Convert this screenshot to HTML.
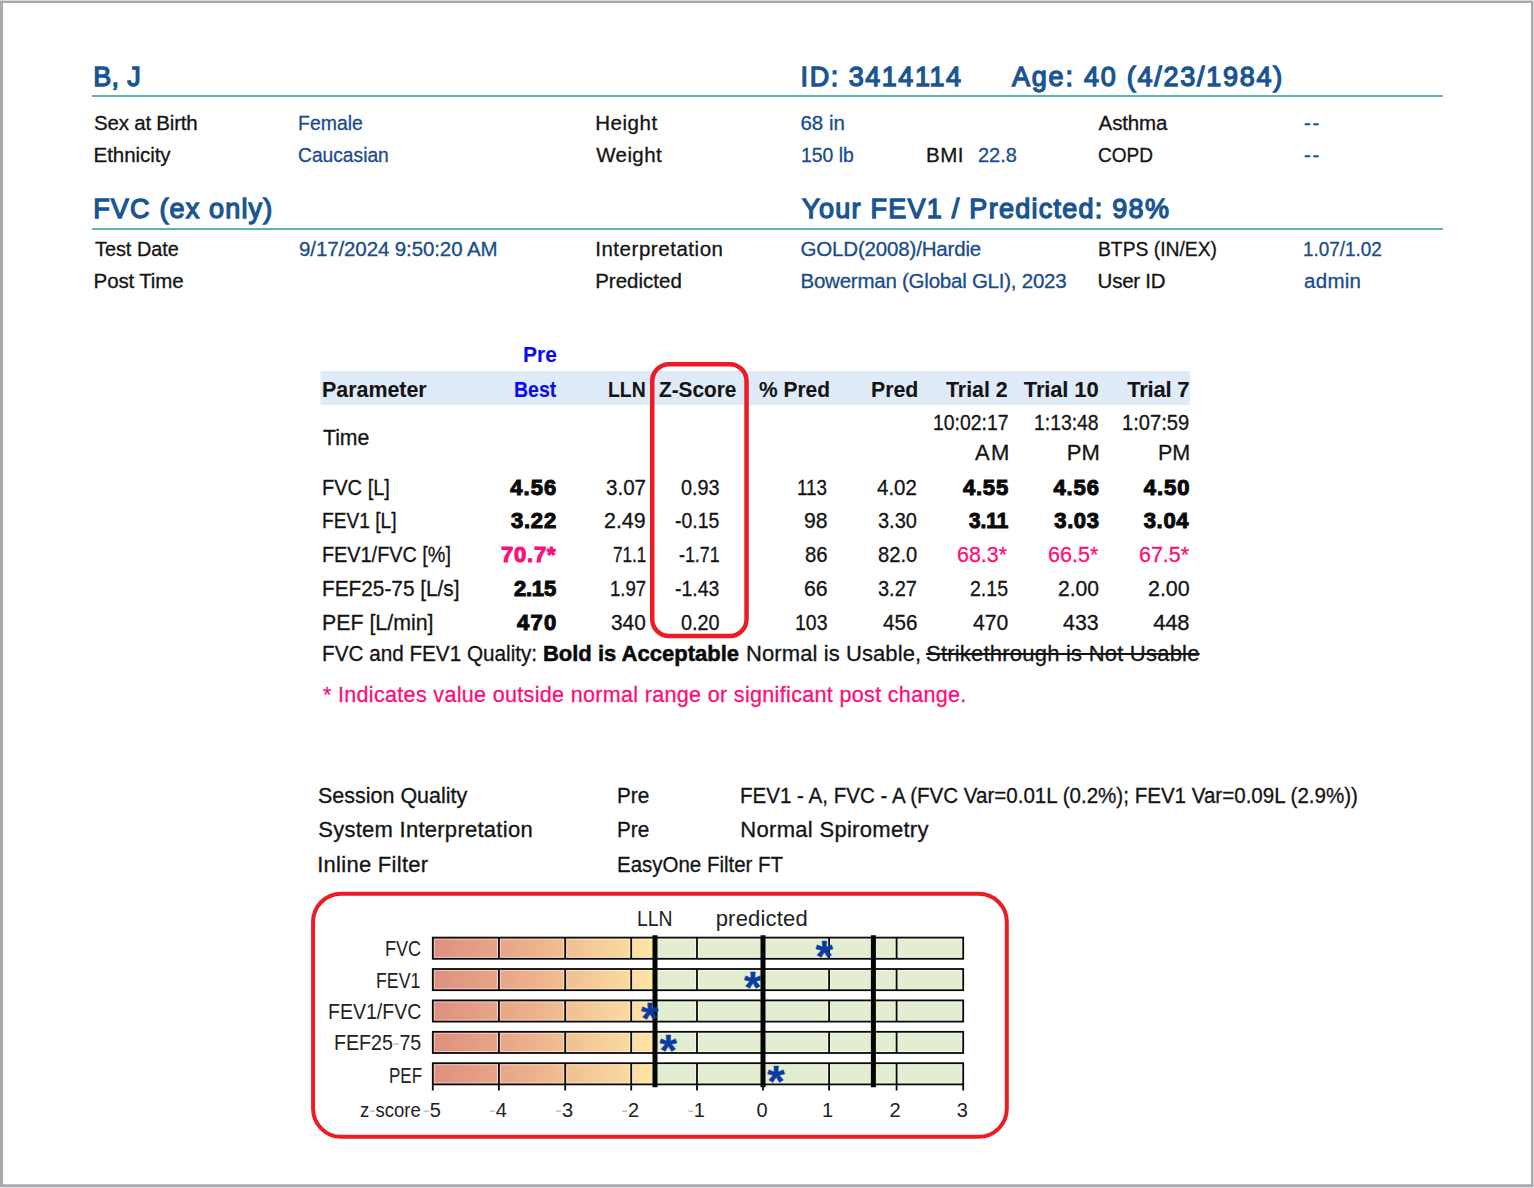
<!DOCTYPE html>
<html lang="en">
<head>
<meta charset="utf-8">
<title>Spirometry Report</title>
<style>
html,body{margin:0;padding:0;}
body{width:1534px;height:1188px;position:relative;overflow:hidden;background:#fff;font-family:"Liberation Sans",sans-serif;color:#141414;}
.frame{position:absolute;left:0;top:0;width:1534px;height:1188px;box-sizing:border-box;border-style:solid;border-color:#a6a8ad;border-width:3px 3px 3px 3px;}
.edge-b2{position:absolute;left:3px;bottom:3px;width:1528px;height:1px;background:#bfc0c4;}
.edge-t{position:absolute;left:0;top:0;width:1534px;height:1px;background:#d6d8db;}
.edge-r{position:absolute;right:0;top:0;width:1px;height:1188px;background:#d6d8db;}
.edge-b{position:absolute;left:0;bottom:0;width:1534px;height:1px;background:#e4e5e7;}
.t{position:absolute;white-space:pre;transform-origin:0 0;-webkit-text-stroke:0.3px currentColor;}
.t i{font-style:normal;color:#c4c4c4;}
.rule{position:absolute;left:92px;width:1351px;height:2px;background:#5fb4b6;}
svg{position:absolute;left:0;top:0;}
</style>
</head>
<body>
<div class="frame"></div><div class="edge-t"></div><div class="edge-r"></div><div class="edge-b"></div><div class="edge-b2"></div>
<div class="rule" style="top:95px"></div>
<div class="rule" style="top:227.5px"></div>
<svg width="1534" height="1188" viewBox="0 0 1534 1188">
<defs><linearGradient id="g" gradientUnits="userSpaceOnUse" x1="432.8" y1="0" x2="655.0" y2="0"><stop offset="0" stop-color="#de8f7e"/><stop offset="0.45" stop-color="#ecb18c"/><stop offset="1" stop-color="#fee5a5"/></linearGradient></defs>
<rect x="320.5" y="371" width="869.5" height="34.1" fill="#e0ebf8"/>
<rect x="432.80" y="937.60" width="222.20" height="21.20" fill="url(#g)"/>
<rect x="655.00" y="937.60" width="308.20" height="21.20" fill="#e3edd0"/>
<rect x="434.20" y="939.00" width="63.30" height="18.40" fill="none" stroke="#fff" stroke-opacity="0.5" stroke-width="1.2"/>
<rect x="500.30" y="939.00" width="63.50" height="18.40" fill="none" stroke="#fff" stroke-opacity="0.5" stroke-width="1.2"/>
<rect x="566.60" y="939.00" width="63.20" height="18.40" fill="none" stroke="#fff" stroke-opacity="0.5" stroke-width="1.2"/>
<rect x="632.60" y="939.00" width="63.00" height="18.40" fill="none" stroke="#fff" stroke-opacity="0.5" stroke-width="1.2"/>
<rect x="698.40" y="939.00" width="63.20" height="18.40" fill="none" stroke="#fff" stroke-opacity="0.5" stroke-width="1.2"/>
<rect x="764.40" y="939.00" width="63.30" height="18.40" fill="none" stroke="#fff" stroke-opacity="0.5" stroke-width="1.2"/>
<rect x="830.50" y="939.00" width="64.70" height="18.40" fill="none" stroke="#fff" stroke-opacity="0.5" stroke-width="1.2"/>
<rect x="898.00" y="939.00" width="63.80" height="18.40" fill="none" stroke="#fff" stroke-opacity="0.5" stroke-width="1.2"/>
<rect x="432.80" y="937.60" width="530.40" height="21.20" fill="none" stroke="#0a0a0a" stroke-width="1.80"/>
<path d="M498.90 937.60V958.80M565.20 937.60V958.80M631.20 937.60V958.80M697.00 937.60V958.80M763.00 937.60V958.80M829.10 937.60V958.80M896.60 937.60V958.80" stroke="#0a0a0a" stroke-width="1.80" fill="none"/>
<rect x="432.80" y="969.00" width="222.20" height="21.20" fill="url(#g)"/>
<rect x="655.00" y="969.00" width="308.20" height="21.20" fill="#e3edd0"/>
<rect x="434.20" y="970.40" width="63.30" height="18.40" fill="none" stroke="#fff" stroke-opacity="0.5" stroke-width="1.2"/>
<rect x="500.30" y="970.40" width="63.50" height="18.40" fill="none" stroke="#fff" stroke-opacity="0.5" stroke-width="1.2"/>
<rect x="566.60" y="970.40" width="63.20" height="18.40" fill="none" stroke="#fff" stroke-opacity="0.5" stroke-width="1.2"/>
<rect x="632.60" y="970.40" width="63.00" height="18.40" fill="none" stroke="#fff" stroke-opacity="0.5" stroke-width="1.2"/>
<rect x="698.40" y="970.40" width="63.20" height="18.40" fill="none" stroke="#fff" stroke-opacity="0.5" stroke-width="1.2"/>
<rect x="764.40" y="970.40" width="63.30" height="18.40" fill="none" stroke="#fff" stroke-opacity="0.5" stroke-width="1.2"/>
<rect x="830.50" y="970.40" width="64.70" height="18.40" fill="none" stroke="#fff" stroke-opacity="0.5" stroke-width="1.2"/>
<rect x="898.00" y="970.40" width="63.80" height="18.40" fill="none" stroke="#fff" stroke-opacity="0.5" stroke-width="1.2"/>
<rect x="432.80" y="969.00" width="530.40" height="21.20" fill="none" stroke="#0a0a0a" stroke-width="1.80"/>
<path d="M498.90 969.00V990.20M565.20 969.00V990.20M631.20 969.00V990.20M697.00 969.00V990.20M763.00 969.00V990.20M829.10 969.00V990.20M896.60 969.00V990.20" stroke="#0a0a0a" stroke-width="1.80" fill="none"/>
<rect x="432.80" y="1000.40" width="222.20" height="21.20" fill="url(#g)"/>
<rect x="655.00" y="1000.40" width="308.20" height="21.20" fill="#e3edd0"/>
<rect x="434.20" y="1001.80" width="63.30" height="18.40" fill="none" stroke="#fff" stroke-opacity="0.5" stroke-width="1.2"/>
<rect x="500.30" y="1001.80" width="63.50" height="18.40" fill="none" stroke="#fff" stroke-opacity="0.5" stroke-width="1.2"/>
<rect x="566.60" y="1001.80" width="63.20" height="18.40" fill="none" stroke="#fff" stroke-opacity="0.5" stroke-width="1.2"/>
<rect x="632.60" y="1001.80" width="63.00" height="18.40" fill="none" stroke="#fff" stroke-opacity="0.5" stroke-width="1.2"/>
<rect x="698.40" y="1001.80" width="63.20" height="18.40" fill="none" stroke="#fff" stroke-opacity="0.5" stroke-width="1.2"/>
<rect x="764.40" y="1001.80" width="63.30" height="18.40" fill="none" stroke="#fff" stroke-opacity="0.5" stroke-width="1.2"/>
<rect x="830.50" y="1001.80" width="64.70" height="18.40" fill="none" stroke="#fff" stroke-opacity="0.5" stroke-width="1.2"/>
<rect x="898.00" y="1001.80" width="63.80" height="18.40" fill="none" stroke="#fff" stroke-opacity="0.5" stroke-width="1.2"/>
<rect x="432.80" y="1000.40" width="530.40" height="21.20" fill="none" stroke="#0a0a0a" stroke-width="1.80"/>
<path d="M498.90 1000.40V1021.60M565.20 1000.40V1021.60M631.20 1000.40V1021.60M697.00 1000.40V1021.60M763.00 1000.40V1021.60M829.10 1000.40V1021.60M896.60 1000.40V1021.60" stroke="#0a0a0a" stroke-width="1.80" fill="none"/>
<rect x="432.80" y="1031.80" width="222.20" height="21.20" fill="url(#g)"/>
<rect x="655.00" y="1031.80" width="308.20" height="21.20" fill="#e3edd0"/>
<rect x="434.20" y="1033.20" width="63.30" height="18.40" fill="none" stroke="#fff" stroke-opacity="0.5" stroke-width="1.2"/>
<rect x="500.30" y="1033.20" width="63.50" height="18.40" fill="none" stroke="#fff" stroke-opacity="0.5" stroke-width="1.2"/>
<rect x="566.60" y="1033.20" width="63.20" height="18.40" fill="none" stroke="#fff" stroke-opacity="0.5" stroke-width="1.2"/>
<rect x="632.60" y="1033.20" width="63.00" height="18.40" fill="none" stroke="#fff" stroke-opacity="0.5" stroke-width="1.2"/>
<rect x="698.40" y="1033.20" width="63.20" height="18.40" fill="none" stroke="#fff" stroke-opacity="0.5" stroke-width="1.2"/>
<rect x="764.40" y="1033.20" width="63.30" height="18.40" fill="none" stroke="#fff" stroke-opacity="0.5" stroke-width="1.2"/>
<rect x="830.50" y="1033.20" width="64.70" height="18.40" fill="none" stroke="#fff" stroke-opacity="0.5" stroke-width="1.2"/>
<rect x="898.00" y="1033.20" width="63.80" height="18.40" fill="none" stroke="#fff" stroke-opacity="0.5" stroke-width="1.2"/>
<rect x="432.80" y="1031.80" width="530.40" height="21.20" fill="none" stroke="#0a0a0a" stroke-width="1.80"/>
<path d="M498.90 1031.80V1053.00M565.20 1031.80V1053.00M631.20 1031.80V1053.00M697.00 1031.80V1053.00M763.00 1031.80V1053.00M829.10 1031.80V1053.00M896.60 1031.80V1053.00" stroke="#0a0a0a" stroke-width="1.80" fill="none"/>
<rect x="432.80" y="1063.20" width="222.20" height="21.20" fill="url(#g)"/>
<rect x="655.00" y="1063.20" width="308.20" height="21.20" fill="#e3edd0"/>
<rect x="434.20" y="1064.60" width="63.30" height="18.40" fill="none" stroke="#fff" stroke-opacity="0.5" stroke-width="1.2"/>
<rect x="500.30" y="1064.60" width="63.50" height="18.40" fill="none" stroke="#fff" stroke-opacity="0.5" stroke-width="1.2"/>
<rect x="566.60" y="1064.60" width="63.20" height="18.40" fill="none" stroke="#fff" stroke-opacity="0.5" stroke-width="1.2"/>
<rect x="632.60" y="1064.60" width="63.00" height="18.40" fill="none" stroke="#fff" stroke-opacity="0.5" stroke-width="1.2"/>
<rect x="698.40" y="1064.60" width="63.20" height="18.40" fill="none" stroke="#fff" stroke-opacity="0.5" stroke-width="1.2"/>
<rect x="764.40" y="1064.60" width="63.30" height="18.40" fill="none" stroke="#fff" stroke-opacity="0.5" stroke-width="1.2"/>
<rect x="830.50" y="1064.60" width="64.70" height="18.40" fill="none" stroke="#fff" stroke-opacity="0.5" stroke-width="1.2"/>
<rect x="898.00" y="1064.60" width="63.80" height="18.40" fill="none" stroke="#fff" stroke-opacity="0.5" stroke-width="1.2"/>
<rect x="432.80" y="1063.20" width="530.40" height="21.20" fill="none" stroke="#0a0a0a" stroke-width="1.80"/>
<path d="M498.90 1063.20V1084.40M565.20 1063.20V1084.40M631.20 1063.20V1084.40M697.00 1063.20V1084.40M763.00 1063.20V1084.40M829.10 1063.20V1084.40M896.60 1063.20V1084.40" stroke="#0a0a0a" stroke-width="1.80" fill="none"/>
<path d="M432.80 1084.40V1090.60M498.90 1084.40V1090.60M565.20 1084.40V1090.60M631.20 1084.40V1090.60M697.00 1084.40V1090.60M763.00 1084.40V1090.60M829.10 1084.40V1090.60M896.60 1084.40V1090.60M963.20 1084.40V1090.60" stroke="#0a0a0a" stroke-width="1.80" fill="none"/>
<path d="M655.00 935.2V1087.20" stroke="#050505" stroke-width="5" fill="none"/>
<path d="M763.00 935.2V1087.20" stroke="#050505" stroke-width="5" fill="none"/>
<path d="M873.40 935.2V1087.20" stroke="#050505" stroke-width="5" fill="none"/>
<rect x="652.25" y="364.25" width="94.3" height="271.8" rx="16.75" fill="none" stroke="#eb1c24" stroke-width="4.5"/>
<rect x="313.1" y="893.8" width="693.7" height="243" rx="28" fill="none" stroke="#eb1c24" stroke-width="4"/>
</svg>
<span class="t" style="left:93.20px;top:64.00px;font-size:27px;line-height:27px;color:#1a5593;letter-spacing:0.329px;-webkit-text-stroke:1.3px currentColor;">B, J</span>
<span class="t" style="left:800.60px;top:64.00px;font-size:27px;line-height:27px;color:#1a5593;letter-spacing:1.530px;-webkit-text-stroke:1.3px currentColor;">ID: 3414114</span>
<span class="t" style="left:1012.10px;top:64.00px;font-size:27px;line-height:27px;color:#1a5593;letter-spacing:1.751px;-webkit-text-stroke:1.3px currentColor;">Age: 40 (4/23/1984)</span>
<span class="t" style="left:94.00px;top:113.00px;font-size:20.5px;line-height:20.5px;letter-spacing:-0.206px;">Sex at Birth</span>
<span class="t" style="left:298.05px;top:113.00px;font-size:20.5px;line-height:20.5px;color:#1a4b8c;transform:scaleX(0.9484);">Female</span>
<span class="t" style="left:595.20px;top:113.00px;font-size:20.5px;line-height:20.5px;letter-spacing:0.528px;">Height</span>
<span class="t" style="left:800.50px;top:113.00px;font-size:20.5px;line-height:20.5px;color:#1a4b8c;letter-spacing:-0.038px;">68 in</span>
<span class="t" style="left:1098.60px;top:113.00px;font-size:20.5px;line-height:20.5px;letter-spacing:-0.139px;">Asthma</span>
<span class="t" style="left:1304.00px;top:113.00px;font-size:20.5px;line-height:20.5px;color:#1a4b8c;letter-spacing:1.773px;">--</span>
<span class="t" style="left:93.60px;top:145.00px;font-size:20.5px;line-height:20.5px;letter-spacing:-0.066px;">Ethnicity</span>
<span class="t" style="left:298.06px;top:145.00px;font-size:20.5px;line-height:20.5px;color:#1a4b8c;transform:scaleX(0.9375);">Caucasian</span>
<span class="t" style="left:596.20px;top:145.00px;font-size:20.5px;line-height:20.5px;letter-spacing:0.413px;">Weight</span>
<span class="t" style="left:800.55px;top:145.00px;font-size:20.5px;line-height:20.5px;color:#1a4b8c;transform:scaleX(0.9458);">150 lb</span>
<span class="t" style="left:926.00px;top:145.00px;font-size:20.5px;line-height:20.5px;letter-spacing:0.475px;">BMI</span>
<span class="t" style="left:977.53px;top:145.00px;font-size:20.5px;line-height:20.5px;color:#1a4b8c;transform:scaleX(0.9741);">22.8</span>
<span class="t" style="left:1097.67px;top:145.00px;font-size:20.5px;line-height:20.5px;transform:scaleX(0.9299);">COPD</span>
<span class="t" style="left:1304.00px;top:145.00px;font-size:20.5px;line-height:20.5px;color:#1a4b8c;letter-spacing:1.773px;">--</span>
<span class="t" style="left:93.20px;top:196.00px;font-size:27px;line-height:27px;color:#1a5593;letter-spacing:1.172px;-webkit-text-stroke:1.3px currentColor;">FVC (ex only)</span>
<span class="t" style="left:802.10px;top:196.00px;font-size:27px;line-height:27px;color:#1a5593;letter-spacing:1.265px;-webkit-text-stroke:1.3px currentColor;">Your FEV1 / Predicted: 98%</span>
<span class="t" style="left:94.60px;top:239.00px;font-size:20.5px;line-height:20.5px;transform:scaleX(0.9676);">Test Date</span>
<span class="t" style="left:299.00px;top:239.00px;font-size:20.5px;line-height:20.5px;color:#1a4b8c;letter-spacing:-0.108px;">9/17/2024 9:50:20 AM</span>
<span class="t" style="left:595.20px;top:239.00px;font-size:20.5px;line-height:20.5px;letter-spacing:0.539px;">Interpretation</span>
<span class="t" style="left:800.50px;top:239.00px;font-size:20.5px;line-height:20.5px;color:#1a4b8c;letter-spacing:-0.171px;">GOLD(2008)/Hardie</span>
<span class="t" style="left:1097.66px;top:239.00px;font-size:20.5px;line-height:20.5px;transform:scaleX(0.9414);">BTPS (IN/EX)</span>
<span class="t" style="left:1303.08px;top:239.00px;font-size:20.5px;line-height:20.5px;color:#1a4b8c;transform:scaleX(0.9228);">1.07/1.02</span>
<span class="t" style="left:93.60px;top:271.00px;font-size:20.5px;line-height:20.5px;letter-spacing:-0.139px;">Post Time</span>
<span class="t" style="left:595.20px;top:271.00px;font-size:20.5px;line-height:20.5px;letter-spacing:0.012px;">Predicted</span>
<span class="t" style="left:800.50px;top:271.00px;font-size:20.5px;line-height:20.5px;color:#1a4b8c;letter-spacing:-0.239px;">Bowerman (Global GLI), 2023</span>
<span class="t" style="left:1097.60px;top:271.00px;font-size:20.5px;line-height:20.5px;letter-spacing:-0.246px;">User ID</span>
<span class="t" style="left:1304.00px;top:271.00px;font-size:20.5px;line-height:20.5px;color:#1a4b8c;letter-spacing:0.292px;">admin</span>
<span class="t" style="left:522.84px;top:344.00px;font-size:22px;line-height:22px;font-weight:700;color:#0a0af0;transform:scaleX(0.9552);-webkit-text-stroke:0.1px currentColor;">Pre</span>
<span class="t" style="left:321.93px;top:379.00px;font-size:22px;line-height:22px;font-weight:700;transform:scaleX(0.9723);-webkit-text-stroke:0.1px currentColor;">Parameter</span>
<span class="t" style="left:513.61px;top:379.00px;font-size:22px;line-height:22px;font-weight:700;color:#0a0af0;transform:scaleX(0.8869);-webkit-text-stroke:0.1px currentColor;">Best</span>
<span class="t" style="left:608.12px;top:379.00px;font-size:22px;line-height:22px;font-weight:700;transform:scaleX(0.8807);-webkit-text-stroke:0.1px currentColor;">LLN</span>
<span class="t" style="left:659.30px;top:379.00px;font-size:22px;line-height:22px;font-weight:700;transform:scaleX(0.9440);-webkit-text-stroke:0.1px currentColor;">Z-Score</span>
<span class="t" style="left:759.00px;top:379.00px;font-size:22px;line-height:22px;font-weight:700;transform:scaleX(0.9515);-webkit-text-stroke:0.1px currentColor;">% Pred</span>
<span class="t" style="left:871.33px;top:379.00px;font-size:22px;line-height:22px;font-weight:700;transform:scaleX(0.9684);-webkit-text-stroke:0.1px currentColor;">Pred</span>
<span class="t" style="left:946.40px;top:379.00px;font-size:22px;line-height:22px;font-weight:700;transform:scaleX(0.9707);-webkit-text-stroke:0.1px currentColor;">Trial 2</span>
<span class="t" style="left:1023.80px;top:379.00px;font-size:22px;line-height:22px;font-weight:700;letter-spacing:-0.142px;-webkit-text-stroke:0.1px currentColor;">Trial 10</span>
<span class="t" style="left:1127.20px;top:379.00px;font-size:22px;line-height:22px;font-weight:700;letter-spacing:-0.210px;-webkit-text-stroke:0.1px currentColor;">Trial 7</span>
<span class="t" style="left:322.90px;top:427.00px;font-size:22px;line-height:22px;transform:scaleX(0.9637);">Time</span>
<span class="t" style="left:932.62px;top:412.00px;font-size:22px;line-height:22px;transform:scaleX(0.8815);">10:02:17</span>
<span class="t" style="left:1034.02px;top:412.00px;font-size:22px;line-height:22px;transform:scaleX(0.8799);">1:13:48</span>
<span class="t" style="left:1122.39px;top:412.00px;font-size:22px;line-height:22px;transform:scaleX(0.9146);">1:07:59</span>
<span class="t" style="left:974.90px;top:442.00px;font-size:22px;line-height:22px;letter-spacing:1.326px;">AM</span>
<span class="t" style="left:1066.80px;top:442.00px;font-size:22px;line-height:22px;letter-spacing:-0.074px;">PM</span>
<span class="t" style="left:1158.32px;top:442.00px;font-size:22px;line-height:22px;transform:scaleX(0.9780);">PM</span>
<span class="t" style="left:321.99px;top:477.00px;font-size:22px;line-height:22px;transform:scaleX(0.9108);">FVC [L]</span>
<span class="t" style="left:510.30px;top:477.00px;font-size:22px;line-height:22px;font-weight:700;color:#0a0a0a;letter-spacing:1.006px;-webkit-text-stroke:1.05px #0a0a0a;">4.56</span>
<span class="t" style="left:606.00px;top:477.00px;font-size:22px;line-height:22px;transform:scaleX(0.9346);">3.07</span>
<span class="t" style="left:680.90px;top:477.00px;font-size:22px;line-height:22px;transform:scaleX(0.9018);">0.93</span>
<span class="t" style="left:797.14px;top:477.00px;font-size:22px;line-height:22px;transform:scaleX(0.8570);">113</span>
<span class="t" style="left:877.40px;top:477.00px;font-size:22px;line-height:22px;transform:scaleX(0.9299);">4.02</span>
<span class="t" style="left:962.90px;top:477.00px;font-size:22px;line-height:22px;font-weight:700;color:#0a0a0a;letter-spacing:0.806px;-webkit-text-stroke:1.05px #0a0a0a;">4.55</span>
<span class="t" style="left:1053.40px;top:477.00px;font-size:22px;line-height:22px;font-weight:700;color:#0a0a0a;letter-spacing:0.906px;-webkit-text-stroke:1.05px #0a0a0a;">4.56</span>
<span class="t" style="left:1143.70px;top:477.00px;font-size:22px;line-height:22px;font-weight:700;color:#0a0a0a;letter-spacing:1.006px;-webkit-text-stroke:1.05px #0a0a0a;">4.50</span>
<span class="t" style="left:322.03px;top:510.00px;font-size:22px;line-height:22px;transform:scaleX(0.8697);">FEV1 [L]</span>
<span class="t" style="left:510.90px;top:510.00px;font-size:22px;line-height:22px;font-weight:700;color:#0a0a0a;letter-spacing:0.806px;-webkit-text-stroke:1.05px #0a0a0a;">3.22</span>
<span class="t" style="left:604.43px;top:510.00px;font-size:22px;line-height:22px;transform:scaleX(0.9716);">2.49</span>
<span class="t" style="left:675.20px;top:510.00px;font-size:22px;line-height:22px;transform:scaleX(0.8836);">-0.15</span>
<span class="t" style="left:803.64px;top:510.00px;font-size:22px;line-height:22px;transform:scaleX(0.9640);">98</span>
<span class="t" style="left:878.30px;top:510.00px;font-size:22px;line-height:22px;transform:scaleX(0.9088);">3.30</span>
<span class="t" style="left:968.90px;top:510.00px;font-size:22px;line-height:22px;font-weight:700;color:#0a0a0a;transform:scaleX(0.9427);-webkit-text-stroke:1.05px #0a0a0a;">3.11</span>
<span class="t" style="left:1054.30px;top:510.00px;font-size:22px;line-height:22px;font-weight:700;color:#0a0a0a;letter-spacing:0.606px;-webkit-text-stroke:1.05px #0a0a0a;">3.03</span>
<span class="t" style="left:1143.70px;top:510.00px;font-size:22px;line-height:22px;font-weight:700;color:#0a0a0a;letter-spacing:0.672px;-webkit-text-stroke:1.05px #0a0a0a;">3.04</span>
<span class="t" style="left:322.00px;top:544.00px;font-size:22px;line-height:22px;transform:scaleX(0.9019);">FEV1/FVC [%]</span>
<span class="t" style="left:501.00px;top:544.00px;font-size:22px;line-height:22px;font-weight:700;color:#fa0f7b;letter-spacing:0.770px;-webkit-text-stroke:1.05px #fa0f7b;">70.7*</span>
<span class="t" style="left:612.62px;top:544.00px;font-size:22px;line-height:22px;transform:scaleX(0.7792);">71.1</span>
<span class="t" style="left:678.80px;top:544.00px;font-size:22px;line-height:22px;transform:scaleX(0.8115);">-1.71</span>
<span class="t" style="left:804.60px;top:544.00px;font-size:22px;line-height:22px;transform:scaleX(0.9243);">86</span>
<span class="t" style="left:878.00px;top:544.00px;font-size:22px;line-height:22px;transform:scaleX(0.9159);">82.0</span>
<span class="t" style="left:957.43px;top:544.00px;font-size:22px;line-height:22px;color:#fa0f7b;transform:scaleX(0.9741);">68.3*</span>
<span class="t" style="left:1048.02px;top:544.00px;font-size:22px;line-height:22px;color:#fa0f7b;transform:scaleX(0.9780);">66.5*</span>
<span class="t" style="left:1138.83px;top:544.00px;font-size:22px;line-height:22px;color:#fa0f7b;transform:scaleX(0.9741);">67.5*</span>
<span class="t" style="left:321.96px;top:578.00px;font-size:22px;line-height:22px;transform:scaleX(0.9450);">FEF25-75 [L/s]</span>
<span class="t" style="left:513.90px;top:578.00px;font-size:22px;line-height:22px;font-weight:700;color:#0a0a0a;letter-spacing:-0.194px;-webkit-text-stroke:1.05px #0a0a0a;">2.15</span>
<span class="t" style="left:609.86px;top:578.00px;font-size:22px;line-height:22px;transform:scaleX(0.8441);">1.97</span>
<span class="t" style="left:675.20px;top:578.00px;font-size:22px;line-height:22px;transform:scaleX(0.8836);">-1.43</span>
<span class="t" style="left:803.64px;top:578.00px;font-size:22px;line-height:22px;transform:scaleX(0.9640);">66</span>
<span class="t" style="left:878.30px;top:578.00px;font-size:22px;line-height:22px;transform:scaleX(0.9088);">3.27</span>
<span class="t" style="left:970.11px;top:578.00px;font-size:22px;line-height:22px;transform:scaleX(0.8874);">2.15</span>
<span class="t" style="left:1057.84px;top:578.00px;font-size:22px;line-height:22px;transform:scaleX(0.9595);">2.00</span>
<span class="t" style="left:1147.83px;top:578.00px;font-size:22px;line-height:22px;transform:scaleX(0.9740);">2.00</span>
<span class="t" style="left:321.93px;top:612.00px;font-size:22px;line-height:22px;transform:scaleX(0.9698);">PEF [L/min]</span>
<span class="t" style="left:516.90px;top:612.00px;font-size:22px;line-height:22px;font-weight:700;color:#0a0a0a;letter-spacing:1.265px;-webkit-text-stroke:1.05px #0a0a0a;">470</span>
<span class="t" style="left:611.30px;top:612.00px;font-size:22px;line-height:22px;transform:scaleX(0.9460);">340</span>
<span class="t" style="left:680.90px;top:612.00px;font-size:22px;line-height:22px;transform:scaleX(0.9018);">0.20</span>
<span class="t" style="left:794.71px;top:612.00px;font-size:22px;line-height:22px;transform:scaleX(0.8852);">103</span>
<span class="t" style="left:882.80px;top:612.00px;font-size:22px;line-height:22px;transform:scaleX(0.9377);">456</span>
<span class="t" style="left:972.80px;top:612.00px;font-size:22px;line-height:22px;transform:scaleX(0.9624);">470</span>
<span class="t" style="left:1063.30px;top:612.00px;font-size:22px;line-height:22px;transform:scaleX(0.9706);">433</span>
<span class="t" style="left:1153.30px;top:612.00px;font-size:22px;line-height:22px;letter-spacing:-0.235px;">448</span>
<span class="t" style="left:321.96px;top:643.00px;font-size:22px;line-height:22px;transform:scaleX(0.9407);">FVC and FEV1 Quality:</span>
<span class="t" style="left:542.90px;top:643.00px;font-size:22px;line-height:22px;font-weight:700;color:#0a0a0a;letter-spacing:0.012px;-webkit-text-stroke:0.5px #0a0a0a;">Bold is Acceptable</span>
<span class="t" style="left:746.00px;top:643.00px;font-size:22px;line-height:22px;letter-spacing:0.094px;">Normal is Usable,</span>
<span class="t" style="left:926.00px;top:643.00px;font-size:22px;line-height:22px;letter-spacing:0.217px;text-decoration:line-through;text-decoration-thickness:1.5px;">Strikethrough is Not Usable</span>
<span class="t" style="left:322.90px;top:685.00px;font-size:21.5px;line-height:21.5px;color:#fa0f7b;letter-spacing:0.337px;">* Indicates value outside normal range or significant post change.</span>
<span class="t" style="left:318.22px;top:785.00px;font-size:22px;line-height:22px;transform:scaleX(0.9766);">Session Quality</span>
<span class="t" style="left:617.16px;top:785.00px;font-size:22px;line-height:22px;transform:scaleX(0.9424);">Pre</span>
<span class="t" style="left:740.37px;top:785.00px;font-size:22px;line-height:22px;transform:scaleX(0.9342);">FEV1 - A, FVC - A (FVC Var=0.01L (0.2%); FEV1 Var=0.09L (2.9%))</span>
<span class="t" style="left:318.20px;top:819.00px;font-size:22px;line-height:22px;letter-spacing:0.267px;">System Interpretation</span>
<span class="t" style="left:617.16px;top:819.00px;font-size:22px;line-height:22px;transform:scaleX(0.9424);">Pre</span>
<span class="t" style="left:740.30px;top:819.00px;font-size:22px;line-height:22px;letter-spacing:0.302px;">Normal Spirometry</span>
<span class="t" style="left:317.20px;top:854.00px;font-size:22px;line-height:22px;letter-spacing:0.278px;">Inline Filter</span>
<span class="t" style="left:617.17px;top:854.00px;font-size:22px;line-height:22px;transform:scaleX(0.9308);">EasyOne Filter FT</span>
<span class="t" style="left:636.92px;top:908.00px;font-size:22px;line-height:22px;color:#222;transform:scaleX(0.8812);-webkit-text-stroke:0;">LLN</span>
<span class="t" style="left:715.70px;top:908.00px;font-size:22px;line-height:22px;color:#222;letter-spacing:0.192px;-webkit-text-stroke:0;">predicted</span>
<span class="t" style="left:385.28px;top:938.00px;font-size:22px;line-height:22px;color:#222;transform:scaleX(0.8188);-webkit-text-stroke:0;">FVC</span>
<span class="t" style="left:375.59px;top:970.00px;font-size:22px;line-height:22px;color:#222;transform:scaleX(0.8050);-webkit-text-stroke:0;">FEV1</span>
<span class="t" style="left:328.01px;top:1001.00px;font-size:22px;line-height:22px;color:#222;transform:scaleX(0.8873);-webkit-text-stroke:0;">FEV1/FVC</span>
<span class="t" style="left:334.41px;top:1032.00px;font-size:22px;line-height:22px;color:#222;transform:scaleX(0.8915);-webkit-text-stroke:0;">FEF25<i>-</i>75</span>
<span class="t" style="left:388.73px;top:1065.00px;font-size:22px;line-height:22px;color:#222;transform:scaleX(0.7739);-webkit-text-stroke:0;">PEF</span>
<span class="t" style="left:360.20px;top:1100.00px;font-size:20px;line-height:20px;color:#222;transform:scaleX(0.9260);-webkit-text-stroke:0;">z<i>-</i>score</span>
<span class="t" style="left:422.97px;top:1100.00px;font-size:20px;line-height:20px;color:#222;-webkit-text-stroke:0;"><i>-</i>5</span>
<span class="t" style="left:489.07px;top:1100.00px;font-size:20px;line-height:20px;color:#222;-webkit-text-stroke:0;"><i>-</i>4</span>
<span class="t" style="left:555.37px;top:1100.00px;font-size:20px;line-height:20px;color:#222;-webkit-text-stroke:0;"><i>-</i>3</span>
<span class="t" style="left:621.37px;top:1100.00px;font-size:20px;line-height:20px;color:#222;-webkit-text-stroke:0;"><i>-</i>2</span>
<span class="t" style="left:687.17px;top:1100.00px;font-size:20px;line-height:20px;color:#222;-webkit-text-stroke:0;"><i>-</i>1</span>
<span class="t" style="left:756.50px;top:1100.00px;font-size:20px;line-height:20px;color:#222;-webkit-text-stroke:0;">0</span>
<span class="t" style="left:822.10px;top:1100.00px;font-size:20px;line-height:20px;color:#222;-webkit-text-stroke:0;">1</span>
<span class="t" style="left:889.60px;top:1100.00px;font-size:20px;line-height:20px;color:#222;-webkit-text-stroke:0;">2</span>
<span class="t" style="left:956.70px;top:1100.00px;font-size:20px;line-height:20px;color:#222;-webkit-text-stroke:0;">3</span>
<span class="t" style="left:815.47px;top:934.00px;font-size:45px;line-height:45px;font-weight:700;color:#0b3ba3;">*</span>
<span class="t" style="left:744.09px;top:965.00px;font-size:45px;line-height:45px;font-weight:700;color:#0b3ba3;">*</span>
<span class="t" style="left:640.97px;top:996.00px;font-size:45px;line-height:45px;font-weight:700;color:#0b3ba3;">*</span>
<span class="t" style="left:659.48px;top:1028.00px;font-size:45px;line-height:45px;font-weight:700;color:#0b3ba3;">*</span>
<span class="t" style="left:767.22px;top:1059.00px;font-size:45px;line-height:45px;font-weight:700;color:#0b3ba3;">*</span>
</body>
</html>
